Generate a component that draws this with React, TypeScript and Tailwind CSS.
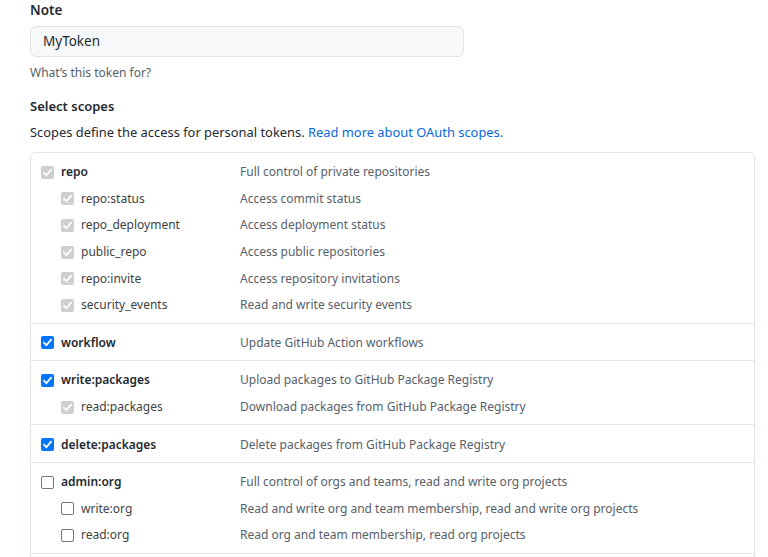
const groups = [
  [
    { name: 'repo', desc: 'Full control of private repositories', state: 'locked', top: true },
    { name: 'repo:status', desc: 'Access commit status', state: 'locked' },
    { name: 'repo_deployment', desc: 'Access deployment status', state: 'locked' },
    { name: 'public_repo', desc: 'Access public repositories', state: 'locked' },
    { name: 'repo:invite', desc: 'Access repository invitations', state: 'locked' },
    { name: 'security_events', desc: 'Read and write security events', state: 'locked' },
  ],
  [{ name: 'workflow', desc: 'Update GitHub Action workflows', state: 'on', top: true }],
  [
    { name: 'write:packages', desc: 'Upload packages to GitHub Package Registry', state: 'on', top: true },
    { name: 'read:packages', desc: 'Download packages from GitHub Package Registry', state: 'locked' },
  ],
  [{ name: 'delete:packages', desc: 'Delete packages from GitHub Package Registry', state: 'on', top: true }],
  [
    { name: 'admin:org', desc: 'Full control of orgs and teams, read and write org projects', state: 'off', top: true },
    { name: 'write:org', desc: 'Read and write org and team membership, read and write org projects', state: 'off' },
    { name: 'read:org', desc: 'Read org and team membership, read org projects', state: 'off' },
  ],
];

function Box({ state }: { state: string }) {
  if (state === 'off') {
    return <span className="block h-[13px] w-[13px] rounded-[2px] border border-[#767676] bg-white" />;
  }
  const bg = state === 'on' ? 'bg-[#0075ff]' : 'bg-[#cfcfcf]';
  return (
    <span className={`flex h-[13px] w-[13px] items-center justify-center rounded-[2px] ${bg}`}>
      <svg viewBox="0 0 13 13" className="h-[13px] w-[13px]">
        <path d="M3 6.8 L5.4 9.2 L10 3.8" fill="none" stroke="white" strokeWidth="1.8" strokeLinecap="square" />
      </svg>
    </span>
  );
}

export default function App() {
  return (
    <div className="h-[557px] overflow-hidden bg-white pl-[30px] pt-[1px] font-['Noto_Sans',sans-serif] text-[#24292f]">
      <div className="text-[13.5px] font-semibold leading-[18px]">Note</div>
      <div className="mt-[7px] flex h-[31px] w-[434px] items-center rounded-[6px] border border-[#e1e4e8] bg-[#f6f8fa] px-[12px] text-[13.5px]">
        MyToken
      </div>
      <div className="mt-[8px] text-[12px] leading-[16px] text-[#57606a]">What’s this token for?</div>
      <div className="mt-[16px] text-[13px] font-semibold leading-[18px]">Select scopes</div>
      <div className="mt-[8px] text-[12.9px] leading-[18px] text-[#24292f]">
        Scopes define the access for personal tokens.{' '}
        <span className="text-[#0969da]">Read more about OAuth scopes.</span>
      </div>
      <div className="mt-[11px] w-[725px] rounded-[6px] border border-[#e1e4e8]">
        {groups.map((g, gi) => (
          <div key={gi} className={`pt-[6px] pb-[4px] ${gi > 0 ? 'border-t border-[#e1e4e8]' : ''}`}>
            {g.map((it) => (
              <div key={it.name} className="flex h-[26.6px] items-center text-[12px]">
                <div className={`flex w-[209px] items-center ${it.top ? 'pl-[10px]' : 'pl-[30px]'}`}>
                  <Box state={it.state} />
                  <span className={`ml-[7px] ${it.top ? 'font-semibold text-[#24292f]' : 'text-[#3d3f44]'}`}>{it.name}</span>
                </div>
                <span className="text-[#57606a]">{it.desc}</span>
              </div>
            ))}
          </div>
        ))}
        <div className="h-[20px] border-t border-[#e1e4e8]" />
      </div>
    </div>
  );
}
